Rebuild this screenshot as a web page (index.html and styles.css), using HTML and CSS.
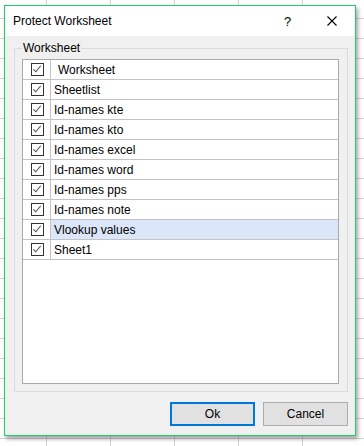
FILE: index.html
```html
<!DOCTYPE html>
<html lang="en">
<head>
    <meta charset="UTF-8">
    <meta name="viewport" content="width=device-width, initial-scale=1.0">
    <title>Protect Worksheet</title>
    <link rel="stylesheet" href="styles.css">
</head>
<body>
    <!-- Dialog window over the sheet grid -->
    <div class="dialog">
        <div class="titlebar">
            <span class="title">Protect Worksheet</span>
            <span class="help">?</span>
            <span class="close">
                <svg width="10" height="10" viewBox="0 0 10 10">
                    <path d="M0.5 0.5 L9.5 9.5 M9.5 0.5 L0.5 9.5" stroke="#000" stroke-width="1.1" fill="none"/>
                </svg>
            </span>
        </div>

        <div class="body">
            <fieldset class="group">
                <legend>Worksheet</legend>

                <!-- Sheet list -->
                <div class="sheet-list">
                    <div class="row">
                        <div class="check-cell"><span class="checkbox"></span></div>
                        <div class="name-cell name-first">Worksheet</div>
                    </div>
                    <div class="row">
                        <div class="check-cell"><span class="checkbox"></span></div>
                        <div class="name-cell">Sheetlist</div>
                    </div>
                    <div class="row">
                        <div class="check-cell"><span class="checkbox"></span></div>
                        <div class="name-cell">Id-names kte</div>
                    </div>
                    <div class="row">
                        <div class="check-cell"><span class="checkbox"></span></div>
                        <div class="name-cell">Id-names kto</div>
                    </div>
                    <div class="row">
                        <div class="check-cell"><span class="checkbox"></span></div>
                        <div class="name-cell">Id-names excel</div>
                    </div>
                    <div class="row">
                        <div class="check-cell"><span class="checkbox"></span></div>
                        <div class="name-cell">Id-names word</div>
                    </div>
                    <div class="row">
                        <div class="check-cell"><span class="checkbox"></span></div>
                        <div class="name-cell">Id-names pps</div>
                    </div>
                    <div class="row">
                        <div class="check-cell"><span class="checkbox"></span></div>
                        <div class="name-cell">Id-names note</div>
                    </div>
                    <div class="row">
                        <div class="check-cell"><span class="checkbox"></span></div>
                        <div class="name-cell selected">Vlookup values</div>
                    </div>
                    <div class="row">
                        <div class="check-cell"><span class="checkbox"></span></div>
                        <div class="name-cell">Sheet1</div>
                    </div>
                </div>
            </fieldset>

            <div class="buttons">
                <button class="btn btn-default">Ok</button>
                <button class="btn">Cancel</button>
            </div>
        </div>
    </div>
</body>
</html>
```

FILE: styles.css
```css
body {
    font-family: 'Liberation Sans', Arial, sans-serif;
    font-size: 12px;
    margin: 0;
    padding: 5px 0 0 4px;
    height: 446px;
    box-sizing: border-box;
    background-color: #fff;
    /* excel grid behind the dialog */
    background-image:
        repeating-linear-gradient(to right, transparent 0, transparent 46px, #d4d4d4 46px, #d4d4d4 47px, transparent 47px, transparent 64px),
        repeating-linear-gradient(to bottom, transparent 0, transparent 18px, #d4d4d4 18px, #d4d4d4 19px, transparent 19px, transparent 20px);
    overflow: hidden;
}

.dialog {
    width: 352px;
    height: 431px;
    box-sizing: border-box;
    border: 1px solid #1fcf6a;
    background-color: #f0f0f0;
    box-shadow: 2px 3px 4px rgba(0, 0, 0, 0.35);
    display: flex;
    flex-direction: column;
}

.titlebar {
    height: 30px;
    background-color: #fff;
    display: flex;
    align-items: center;
    padding-left: 8px;
    color: #000;
}

.title {
    flex: 1;
    font-size: 12px;
}

.help {
    font-size: 13px;
    width: 14px;
    margin-right: 29px;
}

.close {
    display: flex;
    margin-right: 18px;
}

.body {
    flex: 1;
    display: flex;
    flex-direction: column;
    padding: 4px 7px 9px 9px;
}

.group {
    flex: 1;
    margin: 0;
    border: 1px solid #dcdcdc;
    padding: 3px 8px 7px 7px;
    display: flex;
    flex-direction: column;
    min-height: 0;
}

.group legend {
    padding: 0 1px;
    line-height: 16px;
    color: #000;
}

.sheet-list {
    flex: 1;
    background-color: #fff;
    border: 1px solid #a9a9a9;
}

.row {
    display: flex;
    height: 19px;
    border-bottom: 1px solid #c4c4c4;
}

.check-cell {
    width: 26px;
    border-right: 1px solid #c4c4c4;
    display: flex;
    align-items: center;
    justify-content: center;
    padding-left: 1px;
}

.checkbox {
    width: 11px;
    height: 11px;
    border: 1px solid #333;
    background-color: #fff;
    position: relative;
}

/* tick inside the box */
.checkbox::after {
    content: "";
    position: absolute;
    left: 3px;
    top: 0px;
    width: 3px;
    height: 7px;
    border-right: 1.5px solid #555;
    border-bottom: 1.5px solid #555;
    transform: rotate(40deg);
}

.name-cell {
    flex: 1;
    display: flex;
    align-items: center;
    padding-left: 3px;
    color: #000;
}

.name-first {
    padding-left: 7px;
}

.selected {
    background-color: #dbe6f9;
}

.buttons {
    display: flex;
    justify-content: flex-end;
    gap: 8px;
    margin-top: 10px;
}

.btn {
    font-family: 'Liberation Sans', Arial, sans-serif;
    font-size: 12px;
    width: 85px;
    height: 24px;
    background-color: #e1e1e1;
    border: 1px solid #adadad;
    color: #000;
    padding: 0;
}

.btn-default {
    border: 2px solid #0078d7;
}
```
